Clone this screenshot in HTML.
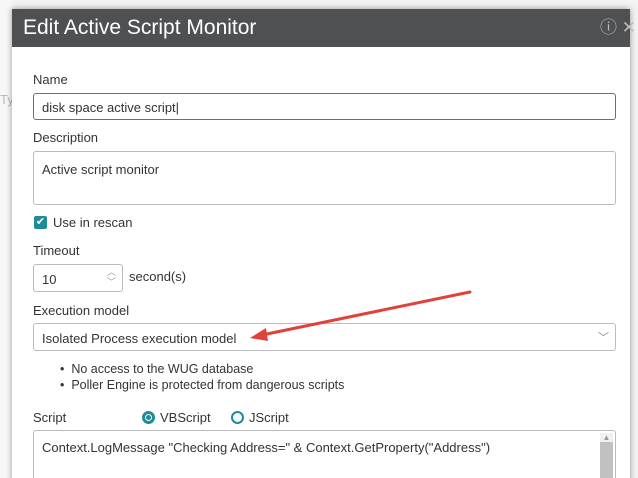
<!DOCTYPE html>
<html style="overflow:hidden;height:478px"><head><style>
body{margin:0;width:638px;height:478px;overflow:hidden;background:#f3f3f3;font-family:"Liberation Sans",sans-serif;position:relative}
.bg{position:absolute;left:0;top:0;width:12px;height:478px;background:#f7f7f7}
.dlg{position:absolute;left:12px;top:9px;width:618px;height:480px;background:#fff;box-shadow:0 0 6px rgba(0,0,0,.4)}
.hdr{position:absolute;left:0;top:0;width:100%;height:38px;background:#4f5052;color:#fff;font-size:21px;line-height:38px;padding-left:11px;box-sizing:border-box}
.a{position:absolute;font-size:13px;color:#333}
.box{position:absolute;border:1px solid #b8bcbf;border-radius:3px;box-sizing:border-box;background:#fff;font-size:13px;color:#333;overflow:hidden}
</style></head><body>
<div class="bg"></div>
<div style="position:absolute;left:0;top:92px;font-size:13px;color:#bbb">Ty</div>
<div class="dlg">
<div class="hdr">Edit Active Script Monitor<span style="position:absolute;right:-6px;top:0;font-size:17px;color:#bbb">ⓘ ✕</span></div>
</div>
<div class="a" style="left:33px;top:72px">Name</div>
<div class="box" style="left:33px;top:93px;width:583px;height:27px;border-color:#2a8a95;padding:6px 8px">disk space active script|</div>
<div class="a" style="left:33px;top:130px">Description</div>
<div class="box" style="left:33px;top:151px;width:583px;height:54px;padding:10px 8px">Active script monitor</div>
<div style="position:absolute;left:34px;top:216px;width:13px;height:13px;background:#1f8c99;border-radius:2px;color:#fff;font-size:11px;line-height:13px;text-align:center">✔</div>
<div class="a" style="left:53px;top:215px">Use in rescan</div>
<div class="a" style="left:33px;top:243px">Timeout</div>
<div class="box" style="left:33px;top:264px;width:90px;height:28px;padding:7px 8px">10<span style="position:absolute;right:6px;top:2px;font-size:9px;color:#999;line-height:10px">︿<br>﹀</span></div>
<div class="a" style="left:129px;top:269px">second(s)</div>
<div class="a" style="left:33px;top:303px">Execution model</div>
<div class="box" style="left:33px;top:323px;width:583px;height:28px;padding:7px 8px">Isolated Process execution model<span style="position:absolute;right:6px;top:5px;color:#888;font-size:11px">﹀</span></div>
<div class="a" style="left:60px;top:361px;font-size:12.5px;line-height:16px">•&nbsp;&nbsp;No access to the WUG database<br>•&nbsp;&nbsp;Poller Engine is protected from dangerous scripts</div>
<div class="a" style="left:33px;top:410px">Script</div>
<div style="position:absolute;left:142px;top:411px;width:7px;height:7px;border:3px solid #1f8c99;border-radius:50%;background:#fff"><div style="width:5px;height:5px;margin:1px;border-radius:50%;background:#1f8c99"></div></div>
<div class="a" style="left:160px;top:410px">VBScript</div>
<div style="position:absolute;left:231px;top:411px;width:9px;height:9px;border:2px solid #1f8c99;border-radius:50%"></div>
<div class="a" style="left:249px;top:410px">JScript</div>
<div class="box" style="left:33px;top:430px;width:583px;height:48px;padding:9px 8px;border-bottom:none;border-radius:3px 3px 0 0">Context.LogMessage "Checking Address=" &amp; Context.GetProperty("Address")
<div style="position:absolute;right:2px;top:2px;width:13px;height:60px;background:#f0f0f0"><div style="color:#999;font-size:8px;text-align:center">▲</div><div style="background:#c1c1c1;height:40px"></div></div></div>
<svg style="position:absolute;left:0;top:0" width="638" height="478"><line x1="470" y1="292" x2="262" y2="335" stroke="#e0413a" stroke-width="3" stroke-linecap="round"/><polygon points="250,338 266,328 268,341" fill="#e0413a"/></svg>
</body></html>
